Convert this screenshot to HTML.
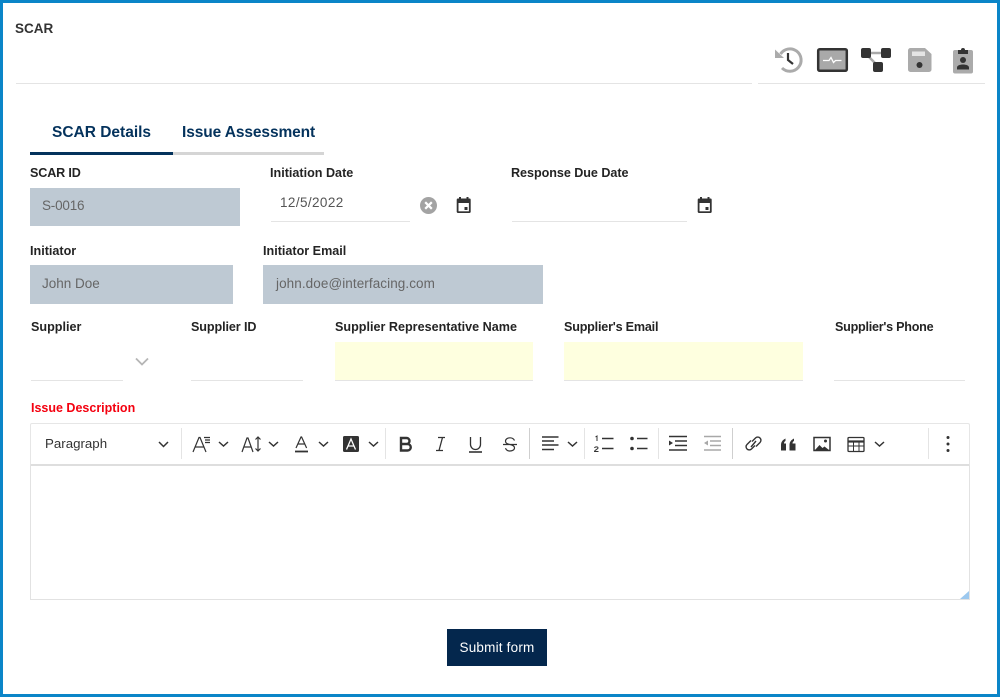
<!DOCTYPE html>
<html><head><meta charset="utf-8"><style>
html,body{margin:0;padding:0;background:#fff}
#p{position:relative;width:1000px;height:697px;overflow:hidden;background:#fff;font-family:"Liberation Sans",sans-serif}
#f{position:absolute;left:0;top:0;width:994px;height:691px;border:3px solid #0b85c8}
.a{position:absolute;white-space:nowrap}
.l{position:absolute;white-space:nowrap;font-size:12.600px;font-weight:700;line-height:16px;color:#242424}
.g{position:absolute;background:#bec9d3}
.v{position:absolute;white-space:nowrap;font-size:13.500px;line-height:16px;color:#666}
.y{position:absolute;background:#feffdf}
.u{position:absolute;height:1px;background:#e4e4e4}
.s{position:absolute;width:1px;top:428px;height:31px;background:#e4e4e4}
svg{position:absolute;overflow:visible}
</style></head><body><div id="p"><div id="f"></div>
<div class="a" style="left:15px;top:20px;font-size:13.500px;font-weight:700;line-height:17px;color:#333">SCAR</div>
<div class="u" style="left:16px;top:83px;width:736px"></div>
<div class="u" style="left:758px;top:83px;width:227px"></div>

<svg style="left:774px;top:45px" width="30" height="30" viewBox="0 0 30 30"><path d="M6.500 9A11.200 11.200 0 1 1 8 23" fill="none" stroke="#ababab" stroke-width="3"/><path d="M1 4.500V13h9z" fill="#ababab"/><path d="M14 8v7l5 4" fill="none" stroke="#333" stroke-width="2.200"/></svg>
<svg style="left:817px;top:48px" width="31" height="24" viewBox="0 0 31 24"><rect x="1.200" y="1.200" width="28.600" height="21.600" rx="1.500" fill="#a9a9a9" stroke="#333" stroke-width="2.500"/><path d="M6 12.500h6l2-3 2.500 5 2-2h6" fill="none" stroke="#fff" stroke-width="1.300"/></svg>
<svg style="left:860px;top:47px" width="32" height="26" viewBox="0 0 32 26"><path d="M8 6h16M8 9l10 10" stroke="#a9a9a9" stroke-width="2.500" fill="none"/><rect x="1" y="1" width="10" height="10" rx="2" fill="#333"/><rect x="21" y="1" width="10" height="10" rx="2" fill="#333"/><rect x="13" y="15" width="10" height="10" rx="2" fill="#333"/></svg>
<svg style="left:908px;top:48px" width="24" height="24" viewBox="0 0 24 24"><path d="M2.500 0H17l6.500 6V21.500a2.500 2.500 0 0 1-2.500 2.500H2.500A2.500 2.500 0 0 1 0 21.500V2.500A2.500 2.500 0 0 1 2.500 0z" fill="#ababab"/><rect x="4" y="3.500" width="13" height="4.500" fill="#e4e4e4"/><circle cx="11.500" cy="17" r="3" fill="#333"/></svg>
<svg style="left:953px;top:46px" width="20" height="28" viewBox="0 0 20 28"><rect x="0" y="4" width="20" height="23.500" rx="2" fill="#ababab"/><path d="M5 8V4h3a2 2 0 0 1 4 0h3v4z" fill="#333"/><circle cx="10" cy="14" r="3" fill="#333"/><path d="M4 23.500v-2c0-2 3-3 6-3s6 1 6 3v2z" fill="#333"/></svg>

<div class="a" style="left:52px;top:123px;font-size:15.500px;font-weight:700;line-height:19px;color:#04325c">SCAR Details</div>
<div class="a" style="left:182px;top:123px;font-size:15.500px;font-weight:700;line-height:19px;color:#04325c;letter-spacing:-.1px">Issue Assessment</div>
<div class="a" style="left:30px;top:152px;width:294px;height:3px;background:#d5d5d5"></div>
<div class="a" style="left:30px;top:152px;width:143px;height:3px;background:#04325c"></div>

<div class="l" style="left:30px;top:165px;letter-spacing:-.15px">SCAR ID</div>
<div class="g" style="left:30px;top:188px;width:210px;height:38px"></div>
<div class="v" style="left:42px;top:198px;letter-spacing:-.2px">S-0016</div>

<div class="l" style="left:270px;top:165px">Initiation Date</div>
<div class="v" style="left:280px;top:195px;color:#555;letter-spacing:.4px">12/5/2022</div>
<div class="u" style="left:271px;top:221px;width:139px"></div>
<svg style="left:420px;top:197px" width="17" height="17" viewBox="0 0 17 17"><circle cx="8.500" cy="8.500" r="8.500" fill="#a3a3a3"/><path d="M5.200 5.200l6.600 6.600M11.800 5.200l-6.600 6.600" stroke="#fff" stroke-width="2.200"/></svg>
<svg style="left:456px;top:197px" width="15" height="17" viewBox="0 0 15 17"><rect x=".7" y="1.500" width="14" height="14.500" rx="1.200" fill="#333"/><rect x="2.500" y="6" width="10.400" height="8.300" fill="#fff"/><rect x="3" y="0" width="2" height="3" fill="#333"/><rect x="10.500" y="0" width="2" height="3" fill="#333"/><rect x="8.500" y="10" width="3" height="3" fill="#333"/></svg>

<div class="l" style="left:511px;top:165px;letter-spacing:-.05px">Response Due Date</div>
<div class="u" style="left:512px;top:221px;width:175px"></div>
<svg style="left:697px;top:197px" width="15" height="17" viewBox="0 0 15 17"><rect x=".7" y="1.500" width="14" height="14.500" rx="1.200" fill="#333"/><rect x="2.500" y="6" width="10.400" height="8.300" fill="#fff"/><rect x="3" y="0" width="2" height="3" fill="#333"/><rect x="10.500" y="0" width="2" height="3" fill="#333"/><rect x="8.500" y="10" width="3" height="3" fill="#333"/></svg>

<div class="l" style="left:30px;top:243px">Initiator</div>
<div class="g" style="left:30px;top:265px;width:203px;height:39px"></div>
<div class="v" style="left:42px;top:276px">John Doe</div>
<div class="l" style="left:263px;top:243px">Initiator Email</div>
<div class="g" style="left:263px;top:265px;width:280px;height:39px"></div>
<div class="v" style="left:276px;top:276px;letter-spacing:.08px">john.doe@interfacing.com</div>

<div class="l" style="left:31px;top:319px">Supplier</div>
<div class="u" style="left:31px;top:380px;width:92px"></div>
<svg style="left:135px;top:357px" width="14" height="9" viewBox="0 0 14 9"><path d="M1 1.500l6 6 6-6" fill="none" stroke="#b5b5b5" stroke-width="1.800"/></svg>
<div class="l" style="left:191px;top:319px;letter-spacing:-.1px">Supplier ID</div>
<div class="u" style="left:191px;top:380px;width:112px"></div>
<div class="l" style="left:335px;top:319px">Supplier Representative Name</div>
<div class="y" style="left:335px;top:342px;width:198px;height:38px"></div>
<div class="u" style="left:335px;top:380px;width:198px"></div>
<div class="l" style="left:564px;top:319px;letter-spacing:-.2px">Supplier's Email</div>
<div class="y" style="left:564px;top:342px;width:239px;height:38px"></div>
<div class="u" style="left:564px;top:380px;width:239px"></div>
<div class="l" style="left:835px;top:319px;letter-spacing:-.25px">Supplier's Phone</div>
<div class="u" style="left:834px;top:380px;width:131px"></div>

<div class="l" style="left:31px;top:400px;font-size:12.500px;color:#f4000f">Issue Description</div>

<div class="a" style="left:30px;top:423px;width:938px;height:40px;border:1px solid #e6e6e6;border-bottom:2px solid #dedede;border-radius:2px 2px 0 0"></div>
<div class="a" style="left:30px;top:465px;width:938px;height:134px;border:1px solid #e2e2e2;border-top:0"></div>
<svg style="left:960px;top:591px" width="9" height="8" viewBox="0 0 9 8"><path d="M9 0v8H0z" fill="#9cc8ee"/></svg>

<div class="a" style="left:45px;top:436px;font-size:13.300px;line-height:16px;color:#333">Paragraph</div>
<svg style="left:0;top:0" width="1000" height="697" viewBox="0 0 1000 697" fill="none" stroke="#333" stroke-width="1.300">
<path d="M159 442l4.500 4.500 4.500-4.500M219 442l4.500 4 4.500-4M269 442l4.500 4 4.500-4M319 442l4.500 4 4.500-4M369 442l4.500 4 4.500-4M568 442l4.500 4 4.500-4M875 442l4.500 4 4.500-4" stroke-width="1.500"/>
<path d="M193 452l6-14.500h1l6 14.500M195.500 447h8M204 437.500h6M205 440h5M205 442.500h5" stroke-width="1.200"/>
<path d="M242 452l5-14h1l5 14M244 447h7M258 437v14M255.500 439.500l2.500-2.500 2.500 2.500M255.500 448.500l2.500 2.500 2.500-2.500" stroke-width="1.200"/>
<path d="M296 448l5-11h.6l5 11M298 444h7" stroke-width="1.200"/><path d="M295 451.500h13" stroke-width="1.800"/>
<rect x="343" y="436" width="16" height="16" rx="1.500" fill="#333" stroke="none"/><path d="M346.500 449.500l4.500-10.500 4.500 10.500M348 446h6" stroke="#fff"/>
<path d="M401 438h5.500a3 3 0 0 1 0 6H401zM401 444h6.500a3.200 3.200 0 0 1 0 6.500H401z" stroke-width="2.400"/>
<path d="M438 437.500h7M436 450.500h7M442.500 437.500l-3.500 13" stroke-width="1.300"/>
<path d="M470.500 437v7.500a5 5 0 0 0 10 0V437"/><path d="M469 452h13" stroke-width="1.600"/>
<path d="M503 444.500h14M514.500 440.500c-.8-1.800-2.500-2.700-4.500-2.700-2.500 0-4.500 1.300-4.500 3.300 0 2 2 3 4.500 3.400 2.500.5 4.500 1.500 4.500 3.400s-2 3.100-4.500 3.100c-2.200 0-3.900-1-4.500-2.800" stroke-width="1.200"/>
<path d="M542 437h16.500M542 441h12M542 445h16.500M542 449.500h12" stroke-width="1.400"/>
<path d="M602 438.500h11.500M602 448.500h11.500" stroke-width="1.500"/>
<path d="M595.500 437l1.500-1v5M594.500 448c.5-1.500 3.500-1.500 3.500 0 0 1.200-3.500 2-3.500 3.500h4" stroke-width="1"/>
<circle cx="632" cy="438.500" r="1.800" fill="#333" stroke="none"/><circle cx="632" cy="448.500" r="1.800" fill="#333" stroke="none"/>
<path d="M637 438.500h10.500M637 448.500h10.500" stroke-width="1.500"/>
<path d="M669 436.500h18M675 441h12M675 445.500h12M669 450h18" stroke-width="1.500"/><path d="M669 440.500l4 2.500-4 2.500z" fill="#333" stroke="none"/>
<path d="M704 436.500h17M710 441h11M710 445.500h11M704 450h17" stroke="#a8a8a8" stroke-width="1.500"/><path d="M708 440.500l-4 2.500 4 2.500z" fill="#a8a8a8" stroke="none"/>
<path d="M752 442l3.500-3.500a3 3 0 0 1 4.500 4.500l-4 4M755 446l-3.500 3.500a3 3 0 0 1-4.500-4.500l4-4M751 447.500l5-6" transform="translate(0 -.5)" stroke-width="1.400"/>
<path d="M781 450.500v-5.500c0-3 1.500-5 4.500-6.500v2.500c-1 .5-1.500 1.200-1.500 2.500h2v7zM789.500 450.500v-5.500c0-3 1.500-5 4.500-6.500v2.500c-1 .5-1.500 1.200-1.500 2.500h3v7z" fill="#333" stroke="none"/>
<rect x="814" y="437.500" width="16" height="13" stroke-width="1.500"/><path d="M815 450l4.500-5 3 3 2-1.500 4.500 3.500z" fill="#333" stroke="none"/><circle cx="825.500" cy="441" r="1.500" fill="#333" stroke="none"/>
<rect x="848" y="437.500" width="16" height="14" rx="1" stroke-width="1.300"/><path d="M848 441.500h16" stroke-width="2.200"/><path d="M848 446h16M853.500 441v10M859 441v10" stroke-width="1"/>
<circle cx="948" cy="437.500" r="1.500" fill="#333" stroke="none"/><circle cx="948" cy="444" r="1.500" fill="#333" stroke="none"/><circle cx="948" cy="450.500" r="1.500" fill="#333" stroke="none"/>
</svg>
<div class="s" style="left:181px"></div><div class="s" style="left:385px"></div><div class="s" style="left:529px;background:#cfcfcf"></div><div class="s" style="left:584px"></div><div class="s" style="left:658px"></div><div class="s" style="left:732px;background:#cfcfcf"></div><div class="s" style="left:928px"></div>

<div class="a" style="left:447px;top:629px;width:100px;height:37px;background:#04274d;color:#fff;font-size:13.500px;line-height:37px;text-align:center;letter-spacing:.2px">Submit form</div>
</div></body></html>
